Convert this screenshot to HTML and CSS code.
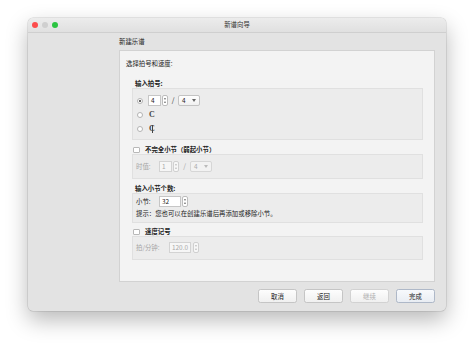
FILE: index.html
```html
<!DOCTYPE html>
<html lang="zh-CN">
<head>
<meta charset="UTF-8">
<title>新谱向导</title>
<link rel="stylesheet" href="styles.css">
</head>
<body>

<div class="window">
  <div class="titlebar">
    <div class="lights">
      <span class="light red"></span>
      <span class="light grey"></span>
      <span class="light green"></span>
    </div>
    <div class="title">新谱向导</div>
    <div></div>
  </div>

  <div class="body">
    <div class="sidebar"></div>

    <div class="main">
      <div class="main-title">新建乐谱</div>

      <div class="panel">
        <div class="intro">选择拍号和速度:</div>

        <!-- time signature -->
        <div class="group-title">输入拍号:</div>
        <div class="group-box box-time">
          <div class="row">
            <span class="radio checked"></span>
            <span class="field w13">4</span>
            <svg class="stepper" width="6" height="11" viewBox="0 0 6 11"><rect x="0.5" y="0.5" width="5" height="10" rx="1.5" fill="#fff" stroke="#bdbdbd"/><path d="M1.8 4.3 L3 2.7 L4.2 4.3Z M1.8 6.7 L3 8.3 L4.2 6.7Z" fill="#555"/></svg>
            <span class="slash">/</span>
            <span class="popup">4<svg width="4" height="3" viewBox="0 0 4 3"><path d="M0 0 L4 0 L2 3Z" fill="#666"/></svg></span>
          </div>
          <div class="row">
            <span class="radio"></span>
            <span class="meter">C</span>
          </div>
          <div class="row">
            <span class="radio"></span>
            <span class="meter cut">C</span>
          </div>
        </div>

        <!-- pickup measure -->
        <div class="group-title check-title"><span class="checkbox"></span>不完全小节（弱起小节）</div>
        <div class="group-box box-pickup">
          <div class="row">
            <span class="label off w23">时值:</span>
            <span class="field w13 off">1</span>
            <svg class="stepper" width="6" height="11" viewBox="0 0 6 11"><rect x="0.5" y="0.5" width="5" height="10" rx="1.5" fill="#f7f7f7" stroke="#d0d0d0"/><path d="M1.8 4.3 L3 2.7 L4.2 4.3Z M1.8 6.7 L3 8.3 L4.2 6.7Z" fill="#b5b5b5"/></svg>
            <span class="slash off">/</span>
            <span class="popup off">4<svg width="4" height="3" viewBox="0 0 4 3"><path d="M0 0 L4 0 L2 3Z" fill="#bbb"/></svg></span>
          </div>
        </div>

        <!-- measures -->
        <div class="group-title">输入小节个数:</div>
        <div class="group-box box-measures">
          <div class="row">
            <span class="label w23">小节:</span>
            <span class="field w22">32</span>
            <svg class="stepper" width="6" height="11" viewBox="0 0 6 11"><rect x="0.5" y="0.5" width="5" height="10" rx="1.5" fill="#fff" stroke="#bdbdbd"/><path d="M1.8 4.3 L3 2.7 L4.2 4.3Z M1.8 6.7 L3 8.3 L4.2 6.7Z" fill="#555"/></svg>
          </div>
          <div class="hint">提示：您也可以在创建乐谱后再添加或移除小节。</div>
        </div>

        <!-- tempo -->
        <div class="group-title check-title"><span class="checkbox"></span>速度记号</div>
        <div class="group-box box-tempo">
          <div class="row">
            <span class="label off w33">拍/分钟:</span>
            <span class="field w22 off">120.0</span>
            <svg class="stepper gap2" width="6" height="11" viewBox="0 0 6 11"><rect x="0.5" y="0.5" width="5" height="10" rx="1.5" fill="#f7f7f7" stroke="#d0d0d0"/><path d="M1.8 4.3 L3 2.7 L4.2 4.3Z M1.8 6.7 L3 8.3 L4.2 6.7Z" fill="#b5b5b5"/></svg>
          </div>
        </div>
      </div>

      <div class="actions">
        <button>取消</button>
        <button>返回</button>
        <button class="disabled">继续</button>
        <button class="default">完成</button>
      </div>
    </div>
  </div>
</div>

</body>
</html>
```

FILE: styles.css
```css
body {
  margin: 0;
  width: 474px;
  height: 348px;
  overflow: hidden;
  background: #ffffff;
  font-family: "Noto Sans CJK SC", "Noto Sans", sans-serif;
  font-size: 6.4px;
  color: #222;
}

.window {
  margin: 18px 0 0 28px;
  width: 418px;
  height: 293px;
  border-radius: 5px;
  background: #e3e3e3;
  box-shadow: 0 0 0 0.5px rgba(0, 0, 0, 0.16), 0 9px 22px rgba(0, 0, 0, 0.28);
  display: flex;
  flex-direction: column;
  overflow: hidden;
}

.titlebar {
  height: 15px;
  flex: none;
  box-sizing: border-box;
  display: grid;
  grid-template-columns: 1fr auto 1fr;
  align-items: center;
  background: linear-gradient(#ececec, #e0e0e0);
  border-bottom: 1px solid #cfcfcf;
}

.lights {
  display: flex;
  gap: 4px;
  padding-left: 4px;
}

.light {
  width: 6px;
  height: 6px;
  border-radius: 50%;
}

.red { background: #fc4c4c; }
.grey { background: #cfcfcf; }
.green { background: #2bc441; }

.title {
  color: #333;
  line-height: 14px;
}

.body {
  flex: 1;
  display: flex;
}

.sidebar {
  width: 91px;
  flex: none;
}

.main {
  flex: 1;
  padding-right: 11px;
  display: flex;
  flex-direction: column;
}

.main-title {
  height: 17px;
  line-height: 17px;
  color: #222;
}

.panel {
  height: 232px;
  box-sizing: border-box;
  border: 1px solid #d2d2d2;
  background: #f3f3f3;
  padding: 9px 11px 0 6px;
}

.intro {
  line-height: 8px;
  margin-bottom: 12px;
}

.group-title {
  margin-left: 6px;
  height: 8px;
  line-height: 8px;
  padding-left: 3px;
  font-weight: bold;
  display: flex;
  align-items: center;
}

.check-title {
  padding-left: 1px;
  gap: 5.5px;
}

.group-box {
  margin-left: 6px;
  margin-bottom: 6px;
  border: 1px solid #e0e0e0;
  background: #ececec;
}

.box-time {
  padding: 6px 4px 5px 4px;
  display: flex;
  flex-direction: column;
  gap: 3px;
}

.box-pickup {
  padding: 6px 3px;
}

.box-measures {
  padding: 2px 3px 4px 3px;
  margin-bottom: 5px;
}

.box-tempo {
  padding: 5px 3px 6px 3px;
}

.row {
  height: 11px;
  display: flex;
  align-items: center;
}

.radio {
  width: 6px;
  height: 6px;
  box-sizing: border-box;
  border-radius: 50%;
  border: 1px solid #b3b3b3;
  background: #fff;
  margin-right: 5px;
  display: flex;
  align-items: center;
  justify-content: center;
}

.radio.checked::after {
  content: "";
  width: 2px;
  height: 2px;
  border-radius: 50%;
  background: #333;
}

.checkbox {
  width: 6.5px;
  height: 6.5px;
  box-sizing: border-box;
  border: 1px solid #b8b8b8;
  border-radius: 1px;
  background: #fff;
}

.meter {
  margin-left: 1px;
  font-family: "Liberation Serif", serif;
  font-weight: bold;
  font-size: 8px;
  line-height: 11px;
  color: #444;
  position: relative;
}

.meter.cut::after {
  content: "";
  position: absolute;
  left: 2.5px;
  top: 1.5px;
  width: 0.8px;
  height: 8.5px;
  background: #444;
}

.label {
  line-height: 11px;
}

.w23 { width: 23px; }
.w33 { width: 33px; }

.off {
  color: #a5a5a5;
}

.field {
  height: 11px;
  box-sizing: border-box;
  border: 1px solid #c6c6c6;
  background: #fff;
  padding-left: 2px;
  line-height: 9px;
  color: #222;
}

.field.off {
  background: #f6f6f6;
  border-color: #d3d3d3;
  color: #a8a8a8;
}

.w13 { width: 13px; }
.w22 { width: 22px; }

.stepper {
  margin-left: 1px;
  flex: none;
}

.stepper.gap2 {
  margin-left: 2px;
}

.slash {
  width: 10px;
  text-align: center;
  font-size: 7px;
  line-height: 11px;
  color: #333;
}

.slash.off {
  width: 11px;
  color: #a5a5a5;
}

.popup {
  width: 22px;
  height: 11px;
  box-sizing: border-box;
  border: 1px solid #c3c3c3;
  border-radius: 2px;
  background: linear-gradient(#ffffff, #f0f0f0);
  padding: 0 3px;
  display: flex;
  align-items: center;
  justify-content: space-between;
  line-height: 9px;
  color: #222;
}

.popup.off {
  background: #f2f2f2;
  border-color: #d6d6d6;
  color: #ababab;
}

.hint {
  margin-top: 3px;
  line-height: 8px;
}

.actions {
  display: flex;
  justify-content: flex-end;
  gap: 7px;
  margin-top: 7px;
}

button {
  width: 39px;
  height: 14px;
  padding: 0;
  border: 1px solid #c5c5c5;
  border-radius: 2.5px;
  background: linear-gradient(#fdfdfd, #f0f0f0);
  font-family: "Noto Sans CJK SC", "Noto Sans", sans-serif;
  font-size: 6.4px;
  color: #222;
}

button.disabled {
  color: #b0b0b0;
  border-color: #d2d2d2;
}

button.default {
  border-color: #aeb8c8;
  background: linear-gradient(#f7f9fc, #e9edf3);
}
```
